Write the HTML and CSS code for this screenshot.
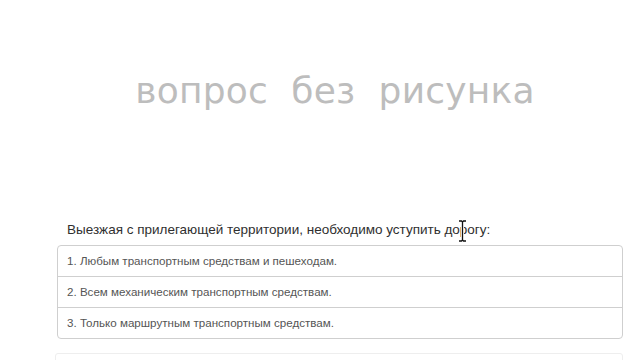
FILE: index.html
```html
<!DOCTYPE html>
<html lang="ru">
<head>
<meta charset="utf-8">
<link rel="stylesheet" href="styles.css">
</head>
<body>
<main class="page">
  <div class="picture"><span class="no-pic">вопрос&nbsp; без&nbsp; рисунка</span></div>
  <div class="question">Выезжая с прилегающей территории, необходимо уступить дорогу:<svg class="cursor" width="9" height="22" viewBox="0 0 9 22"><path d="M1 1h2.5l1 1 1-1H8M4.5 2v18M1 21h2.5l1-1 1 1H8" fill="none" stroke="#fff" stroke-width="3"/><path d="M1 1h2.5l1 1 1-1H8M4.5 2v18M1 21h2.5l1-1 1 1H8" fill="none" stroke="#111" stroke-width="1.3"/></svg></div>
  <ul class="answers">
    <li class="answer">1. Любым транспортным средствам и пешеходам.</li>
    <li class="answer">2. Всем механическим транспортным средствам.</li>
    <li class="answer">3. Только маршрутным транспортным средствам.</li>
  </ul>
  <div class="panel"></div>
</main>
</body>
</html>
```
FILE: styles.css
```css
html, body { margin: 0; padding: 0; background: #fff; }
body { font-family: "Liberation Sans", Arial, sans-serif; overflow: hidden; }
.page { width: 566px; margin-left: 57px; }
.picture { height: 210px; display: flex; align-items: center; justify-content: center; padding-right: 10px; box-sizing: border-box; padding-bottom: 30px; }
.no-pic { font-family: "DejaVu Sans", sans-serif; font-size: 36px; color: #bdbdbd; letter-spacing: 0.2px; }
.question { position: relative; font-size: 13.5px; color: #2f2f2f; line-height: 20px; padding: 10px 10px 5px 10px; }
.cursor { position: absolute; left: 401px; top: 10px; }
.answers { list-style: none; margin: 0; padding: 0; border: 1px solid #cfcfcf; border-radius: 4px; }
.answer { font-size: 11.6px; color: #555; height: 30px; line-height: 30px; padding: 0 9px; border-top: 1px solid #cfcfcf; }
.answer:first-child { border-top: 0; }
.panel { margin-top: 14px; margin-left: -2px; height: 30px; border: 1px solid #eee; border-radius: 3px; }
```
